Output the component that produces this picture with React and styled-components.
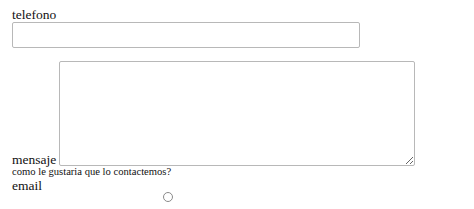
import React from 'react'
import styled, { createGlobalStyle } from 'styled-components'

const Global = createGlobalStyle`
  body {
    margin: 0;
    background: #fff;
    font-family: "Liberation Serif", "Times New Roman", serif;
    color: #111;
  }
`

export default function App() {
  return (
    <>
      <Global />
      <Form>
        <Label>telefono</Label>
        <TextInput type="text" />
        <Row>
          <InlineLabel>mensaje</InlineLabel>
          <Message />
        </Row>
        <Hint>como le gustaria que lo contactemos?</Hint>
        <Label>email</Label>
        <Radio type="radio" name="contacto" />
      </Form>
    </>
  )
}

const Form = styled.form`
  display: flex;
  flex-direction: column;
  align-items: flex-start;
  padding: 7px 0 0 12px;
  font-family: "Liberation Serif", "Times New Roman", serif;
`

const Label = styled.label`
  display: block;
  font-size: 13.5px;
  line-height: 15px;
`

const TextInput = styled.input`
  box-sizing: border-box;
  width: 348px;
  height: 26px;
  margin: 0;
  border: 1px solid #b8b8b8;
  border-radius: 2px;
  background: #fff;
`

const Row = styled.div`
  display: flex;
  align-items: flex-end;
  gap: 3px;
  margin-top: 13px;
`

const InlineLabel = styled.label`
  font-size: 13.5px;
  line-height: 12px;
`

const Message = styled.textarea`
  box-sizing: border-box;
  width: 356px;
  height: 105px;
  margin: 0;
  border: 1px solid #b8b8b8;
  border-radius: 2px;
  resize: both;
  background: #fff;
`

const Hint = styled.div`
  font-size: 10.6px;
  line-height: 12px;
`

const Radio = styled.input`
  appearance: none;
  box-sizing: border-box;
  width: 10px;
  height: 10px;
  margin: -1px 0 0 151px;
  border: 1px solid #8a8a8a;
  border-radius: 50%;
  background: #fff;
`
